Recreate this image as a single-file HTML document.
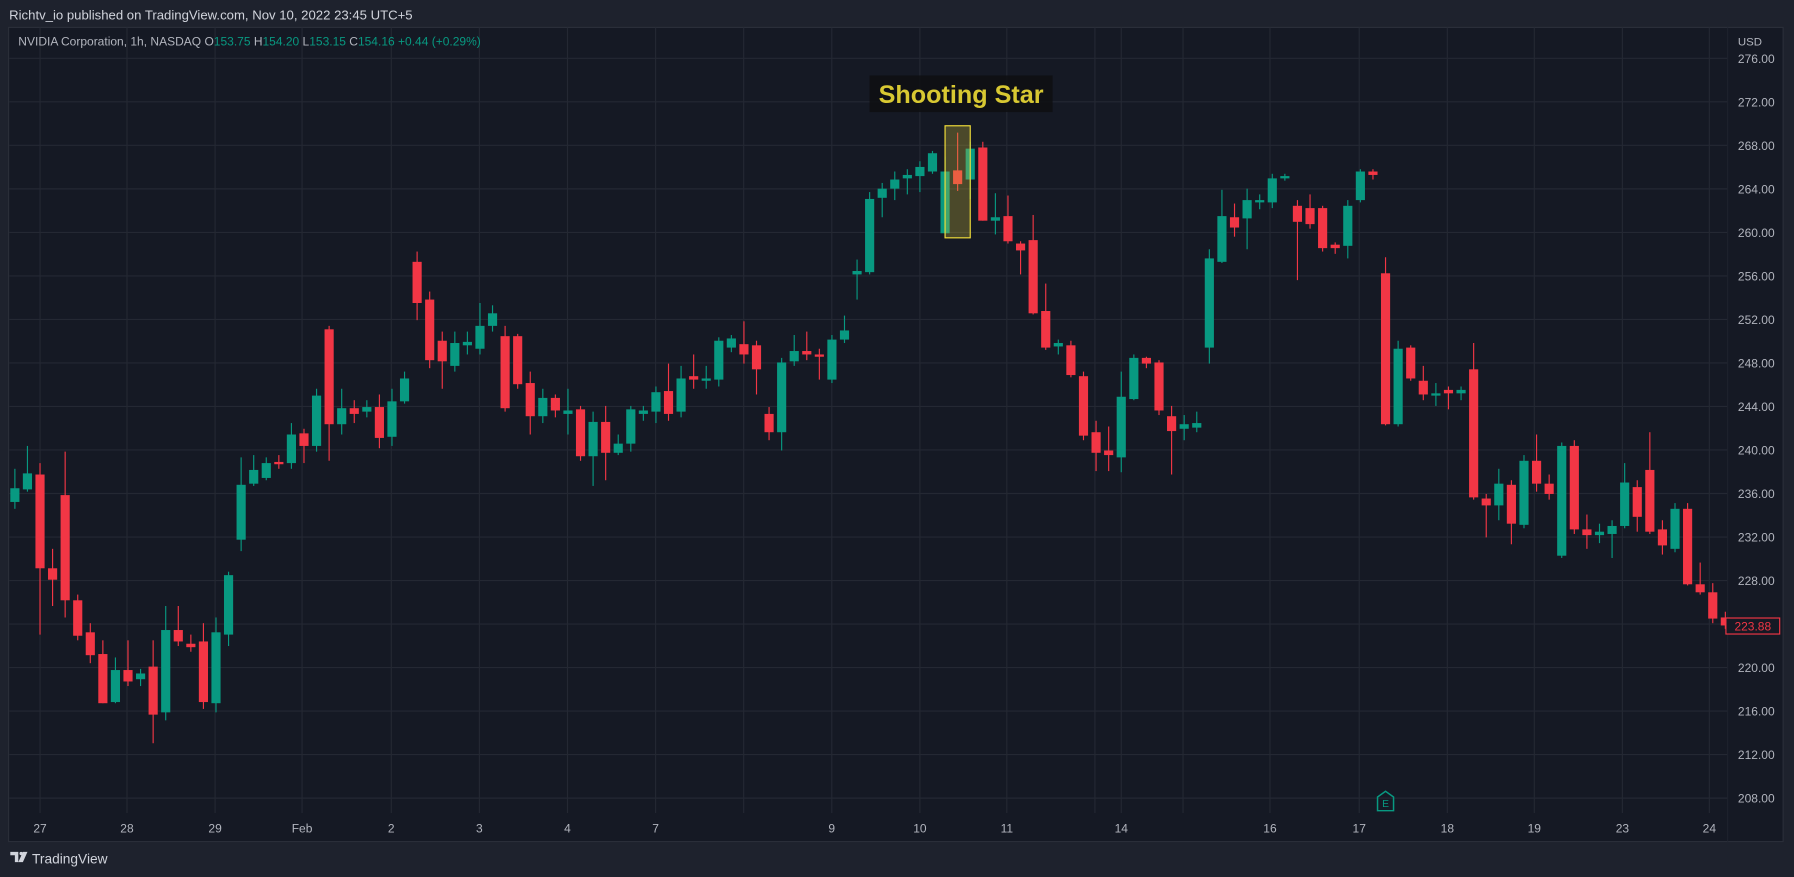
<!DOCTYPE html>
<html><head><meta charset="utf-8"><style>
html,body{margin:0;padding:0;background:#1e222d;width:1794px;height:877px;overflow:hidden}
svg{display:block}
text{font-family:"Liberation Sans",sans-serif}
</style></head><body>
<svg id="s" width="1794" height="877" viewBox="0 0 1568 767" preserveAspectRatio="none">
<rect width="1568" height="767" fill="#1e222d"/>
<text x="8" y="17" fill="#d1d4dc" font-size="11.5">Richtv_io published on TradingView.com, Nov 10, 2022 23:45 UTC+5</text>
<rect x="7.5" y="24" width="1551" height="712" fill="#151924" stroke="#2a2e39"/>
<g id="grid" stroke="#242833" stroke-width="1"></g>
<line id="sep" x1="1510" y1="24" x2="1510" y2="736" stroke="#1e222d"/>
<text x="16" y="40" font-size="10.5" fill="#b2b5be">NVIDIA Corporation, 1h, NASDAQ  <tspan>O</tspan><tspan fill="#089981">153.75</tspan>  H<tspan fill="#089981">154.20</tspan>  L<tspan fill="#089981">153.15</tspan>  C<tspan fill="#089981">154.16</tspan>  <tspan fill="#089981">+0.44 (+0.29%)</tspan></text>
<text x="1519" y="40" font-size="10" fill="#b2b5be">USD</text>
<g id="c"></g>
<rect x="826" y="110" width="22" height="98" fill="#d9c53a" fill-opacity="0.28" stroke="#f5e13a" stroke-width="1"/>
<rect x="760" y="66" width="160" height="32" fill="#0e0f12" fill-opacity="0.85"/>
<text x="840" y="90" text-anchor="middle" font-size="22" font-weight="bold" fill="#d8c832" font-family="DejaVu Sans,sans-serif">Shooting Star</text>
<g id="lbl">
<rect x="1508.5" y="540.5" width="47" height="14" fill="#151924" stroke="#f23645"/>
<text x="1532" y="551.5" text-anchor="middle" font-size="10.5" fill="#f23645">223.88</text>
</g>
<path d="M1204 709 V697 L1211 692 L1218 697 V709 Z" fill="none" stroke="#089981" stroke-width="1.3"/>
<text x="1211" y="706" text-anchor="middle" font-size="9" fill="#089981">E</text>
<g transform="translate(9,745)"><path d="M0 0h7v9h-3v-6h-4z" fill="#d1d4dc"/><circle cx="9.5" cy="1.5" r="1.5" fill="#d1d4dc"/><path d="M11 0h4l-4 9h-4z" fill="#d1d4dc"/></g>
<text x="28" y="755" font-size="12" fill="#d1d4dc">TradingView</text>
</svg>
<script>
var NS="http://www.w3.org/2000/svg",s=document.getElementById('s'),g=document.getElementById('grid'),c=document.getElementById('c');
function el(p,t,a){var e=document.createElementNS(NS,t);for(var k in a)e.setAttribute(k,a[k]);p.appendChild(e);return e;}
var prices=[276,272,268,264,260,256,252,248,244,240,236,232,228,224,220,216,212,208];
prices.forEach(function(p){var y=51+(276-p)*9.515;el(g,'line',{x1:8,x2:1510,y1:y,y2:y});var t=el(s,'text',{x:1519,y:y+4,'font-size':10.5,fill:'#b2b5be'});t.textContent=p.toFixed(2);});
var days=[[35,'27'],[111,'28'],[188,'29'],[264,'Feb'],[342,'2'],[419,'3'],[496,'4'],[573,'7'],[650,''],[727,'9'],[804,'10'],[880,'11'],[957,''],[980,'14'],[1034,''],[1110,'16'],[1188,'17'],[1265,'18'],[1341,'19'],[1418,'23'],[1494,'24']];
days.forEach(function(d){el(g,'line',{x1:d[0],x2:d[0],y1:24,y2:711});if(d[1]){var t=el(s,'text',{x:d[0],y:728,'font-size':10.5,fill:'#b2b5be','text-anchor':'middle'});t.textContent=d[1];}});
var d=[
['g',427,439,410,445],['g',414,428,390,430],['r',415,497,405,555],['r',497,507,480,530],['r',433,525,395,540],['r',525,556,520,560],['r',553,573,545,580],['r',572,615,560,615],['g',586,614,575,615],['r',586,596,560,600],['g',589,594,585,600],['r',583,625,560,650],['g',551,623,530,630],['r',551,561,530,565],['r',563,566,555,570],['r',561,614,545,620],['g',553,615,540,623],['g',503,555,500,565],['g',424,472,400,482],['g',411,423,398,425],['g',405,418,400,420],['r',404,406,398,410],['g',380,405,370,410],['r',379,390,375,405],['g',346,390,340,395],['r',288,371,285,403],['g',357,371,340,380],['r',357,362,350,370],['g',356,360,350,365],['r',356,383,345,392],['g',351,382,340,390],['g',331,351,325,353],['r',229,265,220,280],['r',262,315,255,322],['r',298,316,290,340],['g',300,320,290,325],['g',299,302,290,310],['g',285,305,265,310],['g',274,285,267,290],['r',294,357,285,360],['r',294,336,292,340],['r',335,364,325,380],['g',348,364,340,370],['r',348,359,345,365],['g',359,362,340,380],['r',358,399,355,403],['g',369,399,360,425],['r',369,396,355,420],['g',388,396,380,398],['g',358,388,355,395],['g',359,362,355,368],['g',343,360,338,370],['r',342,362,318,368],['g',331,360,320,365],['r',329,332,310,340],['g',331,333,320,340],['g',298,332,295,338],['g',296,304,293,308],['r',301,310,281,318],['r',302,323,298,345],['r',362,378,356,385],['g',317,378,313,394],['g',307,316,293,320],['r',307,310,290,315],['r',310,312,305,332],['g',297,332,293,335],['g',289,297,276,300],['g',237,240,227,262],['g',174,238,168,240],['g',165,173,160,190],['g',157,165,150,175],['g',153,156,148,170],['g',146,154,141,168],['g',134,150,132,152],['g',150,204,137,208],['r',149,161,116,167],['g',130,157,124,174],['r',129,193,124,193],['g',190,193,169,205],['r',189,211,171,213],['r',213,219,211,240],['r',210,274,188,275],['r',272,304,248,306],['g',300,303,297,310],['r',302,328,298,330],['r',329,381,325,385],['r',378,396,368,412],['r',394,398,373,412],['g',347,400,325,413],['g',313,349,310,350],['r',313,318,312,322],['r',317,359,315,363],['r',364,377,355,415],['g',371,375,363,385],['g',370,374,360,378],['g',226,304,218,318],['g',189,229,166,230],['r',190,199,178,207],['g',175,191,165,218],['g',175,177,170,183],['g',156,177,152,182],['g',154,156,152,158],['r',180,194,175,245],['r',182,196,170,200],['r',182,217,180,220],['r',214,217,212,222],['g',180,215,175,226],['g',150,175,148,177],['r',150,153,148,157],['r',239,371,225,372],['g',305,371,298,373],['r',304,331,302,333],['r',333,345,320,350],['g',344,346,335,355],['r',341,344,338,358],['g',341,344,338,350],['r',323,435,300,437],['r',436,442,432,470],['g',423,442,410,455],['r',424,458,420,476],['g',403,459,398,462],['r',403,423,380,430],['r',423,432,415,437],['g',390,486,387,488],['r',390,463,385,467],['r',463,468,450,480],['g',465,468,458,475],['g',460,467,455,488],['g',422,460,405,462],['r',426,452,420,465],['r',411,465,378,467],['r',463,477,455,485],['g',445,480,440,483],['r',445,511,440,512],['r',511,518,492,520],['r',518,541,510,545],['r',540,547,535,550]];
var idx=0;d.forEach(function(k,i){if(k[1]==150&&k[2]==204)idx=i;});
var n=d.length, spR=(1508-826)/(n-1-idx), spL=(826-13)/idx;
d.forEach(function(k,i){var x=i<=idx?826-(idx-i)*spL:826+(i-idx)*spR;var col=k[0]=='g'?'#089981':'#f23645';
el(c,'line',{x1:x,x2:x,y1:k[3],y2:k[4],stroke:col,'stroke-width':1});
el(c,'rect',{x:x-4,y:k[1],width:8,height:Math.max(2,k[2]-k[1]),fill:col});});
s.appendChild(document.getElementById('lbl'));
</script>
</body></html>
